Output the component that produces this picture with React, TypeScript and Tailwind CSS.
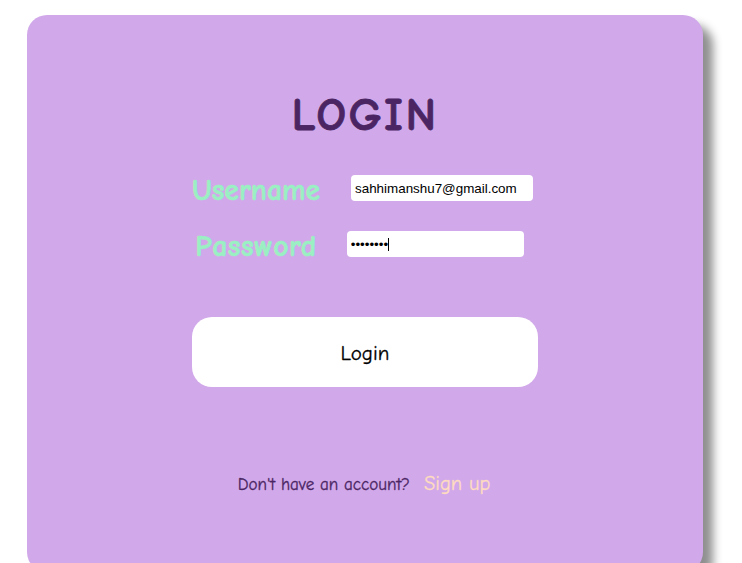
export default function App() {
  return (
    <div className="h-[563px] w-[742px] overflow-hidden bg-white pl-[27px] pt-[15px]" style={{ fontFamily: "'Comic Sans MS','Comic Neue','Noto Sans',cursive" }}>
      <div className="flex h-[557px] w-[676px] flex-col items-center rounded-[20px] bg-[#d1a9ea] pt-[72px] shadow-[10px_10px_10px_#8f8f8f]">
        <h1 className="text-[47px] font-bold leading-[56px] tracking-[0.05em] text-[#4b2563] [-webkit-text-stroke:0.8px_#4b2563]">LOGIN</h1>
        <div className="mt-[32px] flex items-center gap-[31px] pr-[5px]">
          <label className="relative top-[2px] text-[29.6px] font-bold leading-[26px] text-[#9af0c2] [-webkit-text-stroke:0.6px_#9af0c2]">Username</label>
          <input readOnly value="sahhimanshu7@gmail.com" className="h-[26px] w-[182px] rounded bg-white px-1 text-[13.4px] text-black outline-none" style={{ fontFamily: "'Liberation Sans',sans-serif" }} />
        </div>
        <div className="mt-[30px] flex items-center gap-[30px] pr-[11px]">
          <label className="relative top-[2px] text-[29.6px] font-bold leading-[26px] tracking-[0.02em] text-[#9af0c2] [-webkit-text-stroke:0.6px_#9af0c2]">Password</label>
          <div className="relative">
            <input readOnly type="password" value="12345678" className="block h-[26px] w-[177px] rounded bg-white px-1 text-[13.33px] text-black outline-none" style={{ fontFamily: "'Liberation Sans',sans-serif" }} />
            <span className="absolute left-[41px] top-[7px] h-[13px] w-px bg-black" />
          </div>
        </div>
        <button className="mt-[60px] h-[70px] w-[346px] rounded-[20px] bg-white pt-1 text-[21px] text-black [-webkit-text-stroke:0.3px_#000000]">Login</button>
        <div className="mt-[86px] flex items-center gap-[14px] pr-[2px]">
          <span className="text-[17.1px] leading-6 text-[#4b2563] [-webkit-text-stroke:0.3px_#4b2563]">Don't have an account?</span>
          <span className="relative top-[-1px] text-[20.5px] leading-6 text-[#ffdcc0] [-webkit-text-stroke:0.3px_#ffdcc0]">Sign up</span>
        </div>
      </div>
    </div>
  );
}
